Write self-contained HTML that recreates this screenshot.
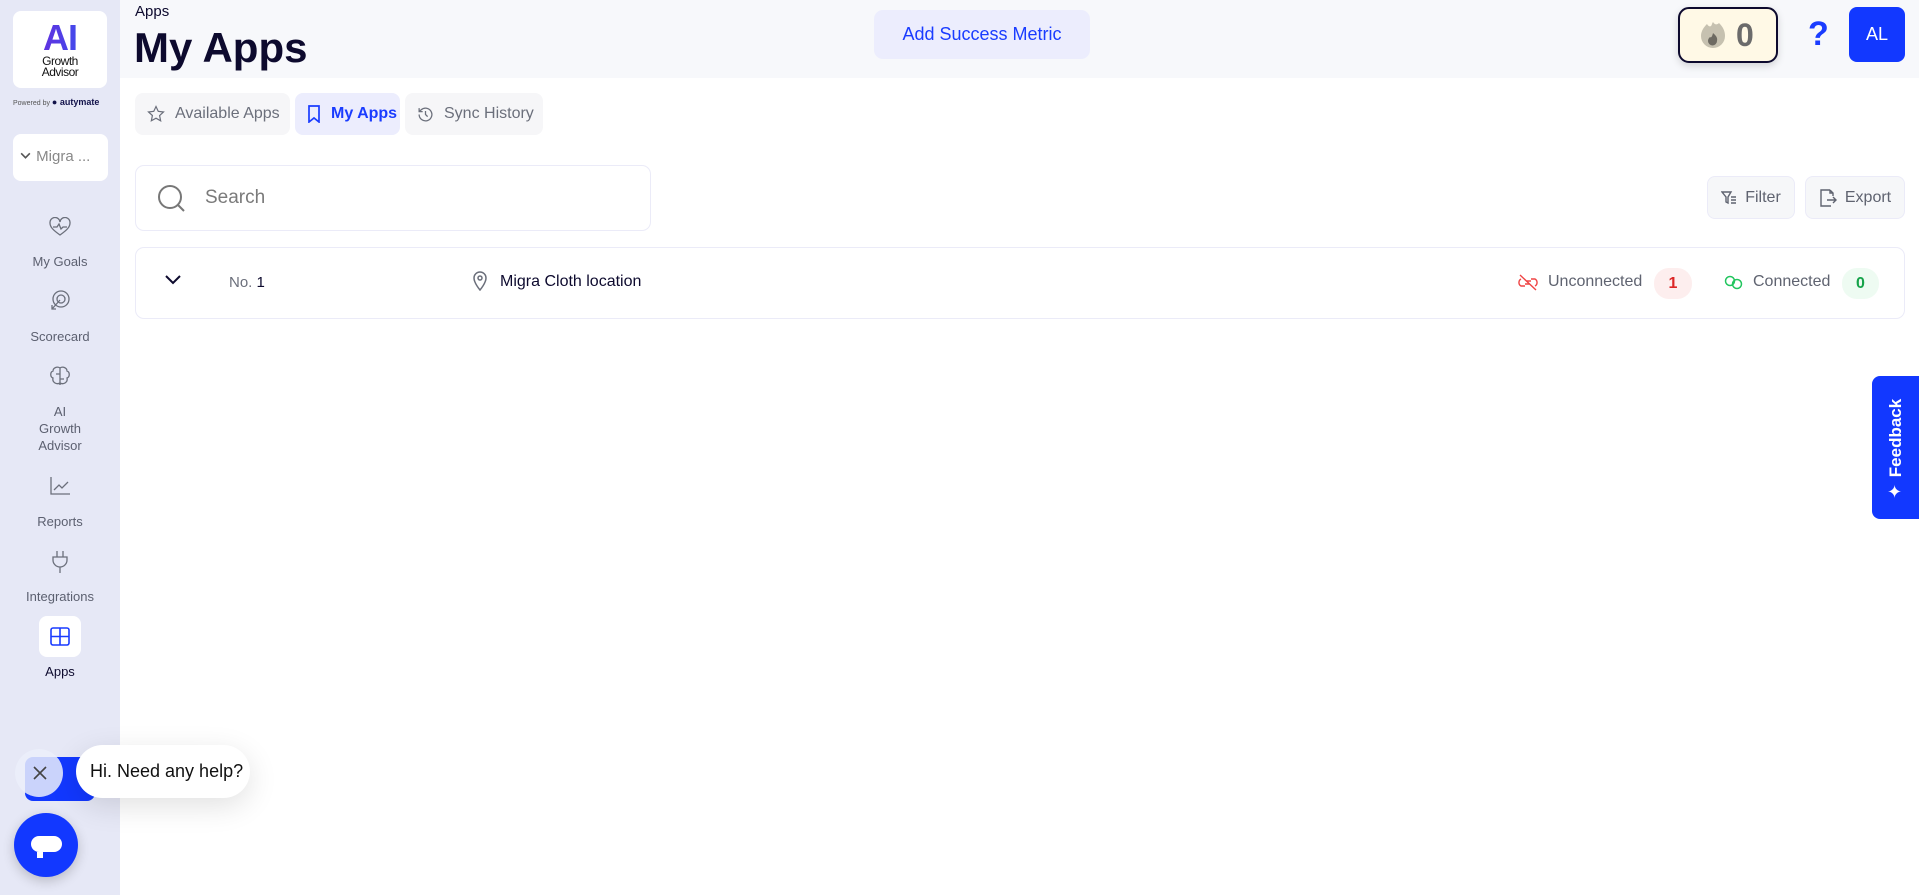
<!DOCTYPE html>
<html><head><meta charset="utf-8"><style>
*{box-sizing:border-box;margin:0;padding:0}
body{width:1919px;height:895px;overflow:hidden;background:#fff;font-family:"Liberation Sans",sans-serif;position:relative;color:#0d0a2e}
.abs{position:absolute}
.side{left:0;top:0;width:120px;height:895px;background:#e6e8f6}
.nav{position:absolute;left:0;width:120px;text-align:center;font-size:13px;color:#5c6070;line-height:17px}
.hdr{left:120px;top:0;width:1799px;height:78px;background:#f7f8fb}
.tab{position:absolute;top:93px;height:42px;border-radius:8px;background:#f6f6f8;font-size:16px;color:#6b6f7b;display:flex;align-items:center;gap:10px;padding-left:12px}
.btn{position:absolute;border:1px solid #ebebf8;border-radius:8px;background:#f6f7f9;font-size:16px;color:#5f6370;display:flex;align-items:center;justify-content:center;gap:8px}
</style></head><body>
<div class="abs side"></div>
<div class="abs" style="left:13px;top:11px;width:94px;height:77px;background:#fff;border-radius:8px;text-align:center">
 <div style="font-size:36px;font-weight:bold;line-height:36px;margin-top:9px;background:linear-gradient(90deg,#7a1fd6,#2a5cf5);-webkit-background-clip:text;color:transparent;letter-spacing:-1px">AI</div>
 <div style="font-size:12px;line-height:11px;color:#111;letter-spacing:-.5px">Growth<br>Advisor</div>
</div>
<div class="abs" style="left:13px;top:97px;font-size:7px;color:#555;width:100px">Powered by <b style="color:#12124a;font-size:9px">● autymate</b></div>
<div class="abs" style="left:13px;top:134px;width:95px;height:47px;background:#fff;border-radius:8px;font-size:15px;color:#888;padding:14px 0 0 6px">
<svg width="13" height="13" viewBox="0 0 12 12" style="vertical-align:-1px"><path d="M2 4l4 4 4-4" fill="none" stroke="#555" stroke-width="1.5"/></svg> Migra ...</div>
<svg class="abs" style="left:48px;top:217px" width="24" height="20" viewBox="0 0 24 20" fill="none" stroke="#6b6f7b" stroke-width="1.3"><path d="M12 18C5 13 2 10 2 6a5 5 0 0 1 10-1 5 5 0 0 1 10 1c0 4-3 7-10 12z"/><path d="M5 10h4l2-3 2 5 2-2h4"/></svg>
<div class="nav" style="top:253px">My Goals</div>
<svg class="abs" style="left:49px;top:289px" width="22" height="22" viewBox="0 0 22 22" fill="none" stroke="#6b6f7b" stroke-width="1.3"><circle cx="12" cy="10" r="8"/><circle cx="12" cy="10" r="4"/><path d="M3 20l8-9M3 16v4h4"/></svg>
<div class="nav" style="top:328px">Scorecard</div>
<svg class="abs" style="left:48px;top:365px" width="24" height="24" viewBox="0 0 24 24" fill="none" stroke="#6b6f7b" stroke-width="1.3"><path d="M12 3c-3-2-7 0-7 3-3 1-3 6 0 7-1 4 3 7 7 5 4 2 8-1 7-5 3-1 3-6 0-7 0-3-4-5-7-3zM12 3v17M8 9h4M12 14h4"/></svg>
<div class="nav" style="top:403px">AI<br>Growth<br>Advisor</div>
<svg class="abs" style="left:49px;top:476px" width="22" height="20" viewBox="0 0 22 20" fill="none" stroke="#6b6f7b" stroke-width="1.3"><path d="M2 1v17h19M5 14l5-5 3 3 6-6"/></svg>
<div class="nav" style="top:513px">Reports</div>
<svg class="abs" style="left:51px;top:550px" width="18" height="24" viewBox="0 0 18 24" fill="none" stroke="#6b6f7b" stroke-width="1.3"><path d="M6 1v6M12 1v6M2 7h14v3a7 7 0 0 1-14 0zM9 17v6"/></svg>
<div class="nav" style="top:588px">Integrations</div>
<div class="abs" style="left:39px;top:616px;width:42px;height:41px;background:#fff;border-radius:8px"></div>
<svg class="abs" style="left:50px;top:627px" width="20" height="19" viewBox="0 0 20 19" fill="none" stroke="#1a3cff" stroke-width="1.6"><rect x="1" y="1" width="18" height="17" rx="2"/><path d="M10 1v17M1 9.5h18"/></svg>
<div class="nav" style="top:663px;color:#0d0a2e">Apps</div>

<div class="abs hdr"></div>
<div class="abs" style="left:135px;top:3px;font-size:15px">Apps</div>
<div class="abs" style="left:134px;top:24px;font-size:42px;font-weight:bold;color:#0d0a2e;line-height:48px">My Apps</div>
<div class="abs" style="left:874px;top:10px;width:216px;height:49px;background:#ecedfd;border-radius:9px;color:#1a3cff;font-size:18px;text-align:center;line-height:49px">Add Success Metric</div>
<div class="abs" style="left:1678px;top:7px;width:100px;height:56px;border:2px solid #0d0a2e;border-radius:11px;background:#fff9e6;box-shadow:0 3px 8px rgba(0,0,0,.15)"></div>
<svg class="abs" style="left:1700px;top:20px" width="26" height="30" viewBox="0 0 26 30"><path d="M13 2c2 3 4 3 6 1 4 4 6 8 6 13a12 12 0 0 1-24 0c0-5 3-9 6-12 1 2 3 3 4 2 1-1 1-3 2-4z" fill="#c6c1b0"/><path d="M13 13c2 2 5 4 4 8a4.5 4.5 0 0 1-9 0c0-2 1-3 2-4 1 1 2 0 3-4z" fill="#6d6a62"/></svg>
<div class="abs" style="left:1736px;top:17px;font-size:32px;font-weight:bold;color:#6b6b6b">0</div>
<div class="abs" style="left:1808px;top:15px;font-size:34px;font-weight:bold;color:#1a3cff">?</div>
<div class="abs" style="left:1849px;top:7px;width:56px;height:55px;background:#1238ff;border-radius:8px;color:#fff;font-size:18px;text-align:center;line-height:55px">AL</div>

<div class="tab" style="left:135px;width:155px"><svg width="18" height="18" viewBox="0 0 24 24" fill="none" stroke="#6b6f7b" stroke-width="1.6"><path d="M12 2l3 6.5 7 .8-5.2 4.8 1.4 7L12 17.6 5.8 21l1.4-7L2 9.3l7-.8z"/></svg>Available Apps</div>
<div class="tab" style="left:295px;width:105px;background:#ecedfd;color:#1a3cff;font-weight:bold"><svg width="14" height="18" viewBox="0 0 14 18" fill="none" stroke="#1a3cff" stroke-width="1.7"><path d="M2 1h10v16l-5-4-5 4z"/></svg>My Apps</div>
<div class="tab" style="left:405px;width:138px"><svg width="17" height="17" viewBox="0 0 24 24" fill="none" stroke="#6b6f7b" stroke-width="1.8"><path d="M3 12a9 9 0 1 0 3-6.7L3 8M3 3v5h5M12 7v5l3 3"/></svg>Sync History</div>

<div class="abs" style="left:135px;top:165px;width:516px;height:66px;border:1px solid #ebebf8;border-radius:9px"></div>
<svg class="abs" style="left:157px;top:184px" width="30" height="30" viewBox="0 0 30 30" fill="none" stroke="#777" stroke-width="2"><circle cx="13" cy="13" r="11"/><path d="M21 21l6 6"/></svg>
<div class="abs" style="left:205px;top:187px;font-size:19px;color:#7a7a7a">Search</div>
<div class="btn" style="left:1707px;top:176px;width:88px;height:43px"><svg width="16" height="14" viewBox="0 0 16 14" fill="none" stroke="#5f6370" stroke-width="1.4"><path d="M1 1h9L7 6v6L5 11V6zM10 6h5M10 9h5M10 12h5"/></svg>Filter</div>
<div class="btn" style="left:1805px;top:176px;width:100px;height:43px"><svg width="18" height="18" viewBox="0 0 18 18" fill="none" stroke="#5f6370" stroke-width="1.4"><path d="M11 1H2v16h10M11 1l3 3v3M11 1v3h3M8 11h9M14 8l3 3-3 3"/></svg>Export</div>

<div class="abs" style="left:135px;top:247px;width:1770px;height:72px;border:1px solid #ebebf8;border-radius:9px"></div>
<svg class="abs" style="left:164px;top:274px" width="18" height="12" viewBox="0 0 18 12" fill="none" stroke="#0d0a2e" stroke-width="2"><path d="M2 2l7 7 7-7"/></svg>
<div class="abs" style="left:229px;top:274px;font-size:15px;color:#6b6f7b">No. <span style="color:#0d0a2e">1</span></div>
<svg class="abs" style="left:473px;top:271px" width="14" height="20" viewBox="0 0 14 20" fill="none" stroke="#6b6f7b" stroke-width="1.5"><path d="M7 19s6-7 6-12A6 6 0 0 0 1 7c0 5 6 12 6 12z"/><circle cx="7" cy="7" r="2"/></svg>
<div class="abs" style="left:500px;top:273px;font-size:16px;color:#0d0a2e">Migra Cloth location</div>
<svg class="abs" style="left:1518px;top:274px" width="20" height="17" viewBox="0 0 20 17" fill="none" stroke="#ef4444" stroke-width="1.4"><path d="M3 5a4 4 0 0 0 0 7h4M17 12a4 4 0 0 0 0-7h-4M8 7h5M7 10h5M2 1l16 15"/></svg>
<div class="abs" style="left:1548px;top:273px;font-size:16px;color:#5f6370">Unconnected</div>
<div class="abs" style="left:1654px;top:268px;width:38px;height:31px;border-radius:15px;background:#fdeeee;color:#dc2626;font-size:16px;font-weight:bold;text-align:center;line-height:31px">1</div>
<svg class="abs" style="left:1724px;top:275px" width="20" height="15" viewBox="0 0 20 15" fill="none" stroke="#22c55e" stroke-width="1.5"><circle cx="6" cy="6" r="4.5"/><circle cx="13" cy="9" r="4.5"/></svg>
<div class="abs" style="left:1753px;top:273px;font-size:16px;color:#5f6370">Connected</div>
<div class="abs" style="left:1842px;top:268px;width:37px;height:31px;border-radius:15px;background:#eefbf2;color:#16a34a;font-size:16px;font-weight:bold;text-align:center;line-height:31px">0</div>

<div class="abs" style="left:1872px;top:376px;width:50px;height:143px;background:#1238ff;border-radius:8px 0 0 8px"></div>
<div class="abs" style="left:1896px;top:438px;transform:translate(-50%,-50%) rotate(-90deg);color:#fff;font-size:17px;font-weight:bold;white-space:nowrap">Feedback</div>
<div class="abs" style="left:1887px;top:482px;color:#fff;font-size:18px">✦</div>

<div class="abs" style="left:25px;top:757px;width:70px;height:44px;background:#1238ff;border-radius:8px"></div>
<div class="abs" style="left:76px;top:745px;width:174px;height:53px;background:#fff;border-radius:27px;box-shadow:0 8px 30px rgba(0,0,0,.12);font-size:18px;color:#111;line-height:53px;padding-left:14px">Hi. Need any help?</div>
<div class="abs" style="left:15px;top:749px;width:48px;height:48px;border-radius:50%;background:rgba(235,238,250,.85)"></div>
<svg class="abs" style="left:32px;top:765px" width="16" height="16" viewBox="0 0 16 16" stroke="#444" stroke-width="1.6"><path d="M2 2l12 12M14 2L2 14"/></svg>
<div class="abs" style="left:14px;top:813px;width:64px;height:64px;border-radius:50%;background:#1238ff;box-shadow:0 4px 12px rgba(0,0,0,.2)"></div>
<div class="abs" style="left:31px;top:836px;width:31px;height:16px;border-radius:8px;background:#fff"></div>
<div class="abs" style="left:37px;top:852px;width:0;height:0;border-left:6px solid #fff;border-top:6px solid #fff"></div>
</body></html>
